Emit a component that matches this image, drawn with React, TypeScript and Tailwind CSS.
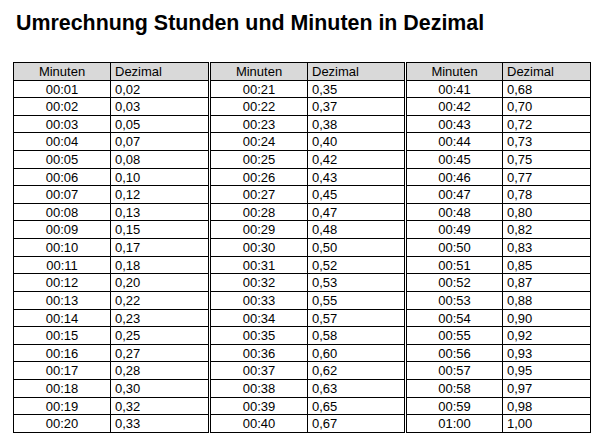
const data: [string, string][] = [
  ["00:01", "0,02"], ["00:02", "0,03"], ["00:03", "0,05"], ["00:04", "0,07"], ["00:05", "0,08"],
  ["00:06", "0,10"], ["00:07", "0,12"], ["00:08", "0,13"], ["00:09", "0,15"], ["00:10", "0,17"],
  ["00:11", "0,18"], ["00:12", "0,20"], ["00:13", "0,22"], ["00:14", "0,23"], ["00:15", "0,25"],
  ["00:16", "0,27"], ["00:17", "0,28"], ["00:18", "0,30"], ["00:19", "0,32"], ["00:20", "0,33"],
  ["00:21", "0,35"], ["00:22", "0,37"], ["00:23", "0,38"], ["00:24", "0,40"], ["00:25", "0,42"],
  ["00:26", "0,43"], ["00:27", "0,45"], ["00:28", "0,47"], ["00:29", "0,48"], ["00:30", "0,50"],
  ["00:31", "0,52"], ["00:32", "0,53"], ["00:33", "0,55"], ["00:34", "0,57"], ["00:35", "0,58"],
  ["00:36", "0,60"], ["00:37", "0,62"], ["00:38", "0,63"], ["00:39", "0,65"], ["00:40", "0,67"],
  ["00:41", "0,68"], ["00:42", "0,70"], ["00:43", "0,72"], ["00:44", "0,73"], ["00:45", "0,75"],
  ["00:46", "0,77"], ["00:47", "0,78"], ["00:48", "0,80"], ["00:49", "0,82"], ["00:50", "0,83"],
  ["00:51", "0,85"], ["00:52", "0,87"], ["00:53", "0,88"], ["00:54", "0,90"], ["00:55", "0,92"],
  ["00:56", "0,93"], ["00:57", "0,95"], ["00:58", "0,97"], ["00:59", "0,98"], ["01:00", "1,00"],
]

function ConversionTable({
  rows,
  minCol,
  decCol,
}: {
  rows: [string, string][]
  minCol: string
  decCol: string
}) {
  const cell = "h-[17.62px] leading-[17.62px] border-r border-b border-black"
  return (
    <div className="flex flex-col border-l border-t border-black">
      <div className="flex bg-[#d9d9d9]">
        <div className={`${cell} ${minCol} text-center`}>Minuten</div>
        <div className={`${cell} ${decCol} pl-[4px]`}>Dezimal</div>
      </div>
      {rows.map(([min, dec]) => (
        <div key={min} className="flex">
          <div className={`${cell} ${minCol} text-center`}>{min}</div>
          <div className={`${cell} ${decCol} pl-[4px]`}>{dec}</div>
        </div>
      ))}
    </div>
  )
}

export default function App() {
  return (
    <div className="w-[603px] h-[447px] bg-white text-black font-['Liberation_Sans',Arial,sans-serif]">
      <h1 className="pt-[9px] pl-[16px] text-[21.4px] leading-[28px] font-bold">
        Umrechnung Stunden und Minuten in Dezimal
      </h1>
      <div className="mt-[25px] pl-[13px] flex gap-[1px] text-[13px]">
        <ConversionTable rows={data.slice(0, 20)} minCol="w-[97px]" decCol="w-[98px]" />
        <ConversionTable rows={data.slice(20, 40)} minCol="w-[97px]" decCol="w-[97px]" />
        <ConversionTable rows={data.slice(40, 60)} minCol="w-[96px]" decCol="w-[88px]" />
      </div>
    </div>
  )
}
